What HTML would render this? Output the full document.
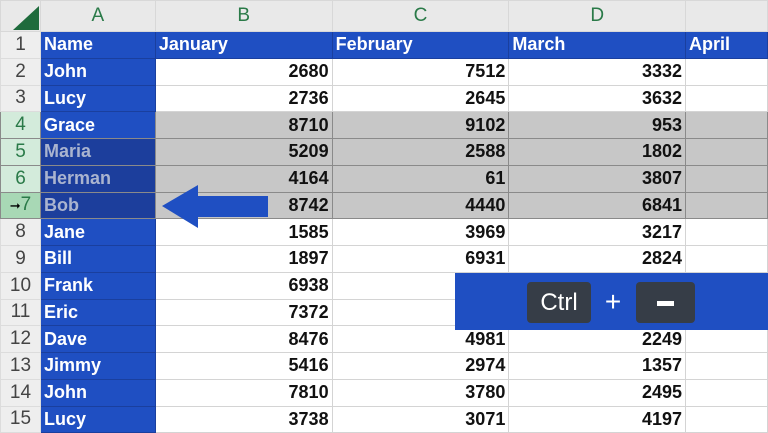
<!DOCTYPE html>
<html><head><style>
body{margin:0;width:768px;height:432px;overflow:hidden;background:#fff;font-family:"Liberation Sans",sans-serif;position:relative}
table{border-collapse:collapse;position:absolute;left:0;top:0;table-layout:fixed}
td{border:1px solid #d4d4d4;height:25.75px;padding:0 3px;font-size:18px;font-weight:bold;color:#111;text-align:right;white-space:nowrap;overflow:hidden}
tr.h td{height:30px;background:#e9e9e9;color:#2a7a48;font-weight:normal;text-align:center;font-size:19px;border-color:#d8d8d8}
td.r{background:#eeeeee;color:#444;font-weight:normal;text-align:center;font-size:19px;padding:0;border-color:#dcdcdc}
td.a{background:#1f4fc2;color:#fff;text-align:left;border-color:#1a3f9e}
td.t{background:#1f4fc2;color:#fff;text-align:left;border-color:#1a3f9e}
tr.g td{background:#c7c7c7;border-color:#8a8a8a}
tr.g td.r{background:#d3ebdb;color:#2a7a48}
tr.g td.a{background:#1f4fc2;color:#fff}
tr.d td.a{background:#1c3e9c;color:#aab4cf}
tr.b td.r{background:#a8d8b5}
</style></head><body>
<table>
<colgroup><col style="width:40px"><col style="width:115px"><col style="width:177px"><col style="width:177px"><col style="width:177px"><col style="width:82px"></colgroup>
<tr class="h"><td style="background:#e9e9e9;position:relative"><svg style="position:absolute;left:12px;top:5px" width="26" height="24"><polygon points="26,0 26,24 0,24" fill="#1e6b3c"/></svg></td><td>A</td><td>B</td><td>C</td><td>D</td><td></td></tr>
<tr><td class="r">1</td><td class="t">Name</td><td class="t">January</td><td class="t">February</td><td class="t">March</td><td class="t">April</td></tr>
<tr><td class="r">2</td><td class="a">John</td><td>2680</td><td>7512</td><td>3332</td><td></td></tr>
<tr><td class="r">3</td><td class="a">Lucy</td><td>2736</td><td>2645</td><td>3632</td><td></td></tr>
<tr class="g"><td class="r">4</td><td class="a">Grace</td><td>8710</td><td>9102</td><td>953</td><td></td></tr>
<tr class="g d"><td class="r">5</td><td class="a">Maria</td><td>5209</td><td>2588</td><td>1802</td><td></td></tr>
<tr class="g d"><td class="r">6</td><td class="a">Herman</td><td>4164</td><td>61</td><td>3807</td><td></td></tr>
<tr class="g d b"><td class="r"><span style="font-size:13px;color:#000">➞</span>7</td><td class="a">Bob</td><td>8742</td><td>4440</td><td>6841</td><td></td></tr>
<tr><td class="r">8</td><td class="a">Jane</td><td>1585</td><td>3969</td><td>3217</td><td></td></tr>
<tr><td class="r">9</td><td class="a">Bill</td><td>1897</td><td>6931</td><td>2824</td><td></td></tr>
<tr><td class="r">10</td><td class="a">Frank</td><td>6938</td><td></td><td></td><td></td></tr>
<tr><td class="r">11</td><td class="a">Eric</td><td>7372</td><td></td><td></td><td></td></tr>
<tr><td class="r">12</td><td class="a">Dave</td><td>8476</td><td>4981</td><td>2249</td><td></td></tr>
<tr><td class="r">13</td><td class="a">Jimmy</td><td>5416</td><td>2974</td><td>1357</td><td></td></tr>
<tr><td class="r">14</td><td class="a">John</td><td>7810</td><td>3780</td><td>2495</td><td></td></tr>
<tr><td class="r">15</td><td class="a">Lucy</td><td>3738</td><td>3071</td><td>4197</td><td></td></tr>
</table>
<svg style="position:absolute;left:160px;top:183px" width="112" height="48"><polygon points="2,23 38,2 38,13 108,13 108,34 38,34 38,45" fill="#1f4fc2"/></svg>
<div style="position:absolute;left:455px;top:273px;width:313px;height:57px;background:#1f4fc2"></div>
<div style="position:absolute;left:527px;top:282px;width:64px;height:41px;background:#363d47;border-radius:4px;color:#fff;font-size:24px;line-height:41px;text-align:center">Ctrl</div>
<div style="position:absolute;left:598px;top:282px;width:30px;height:41px;color:#fff;font-size:28px;line-height:40px;text-align:center">+</div>
<div style="position:absolute;left:636px;top:282px;width:59px;height:41px;background:#363d47;border-radius:4px"><div style="position:absolute;left:21px;top:19px;width:17px;height:5px;background:#fff"></div></div>
</body></html>
